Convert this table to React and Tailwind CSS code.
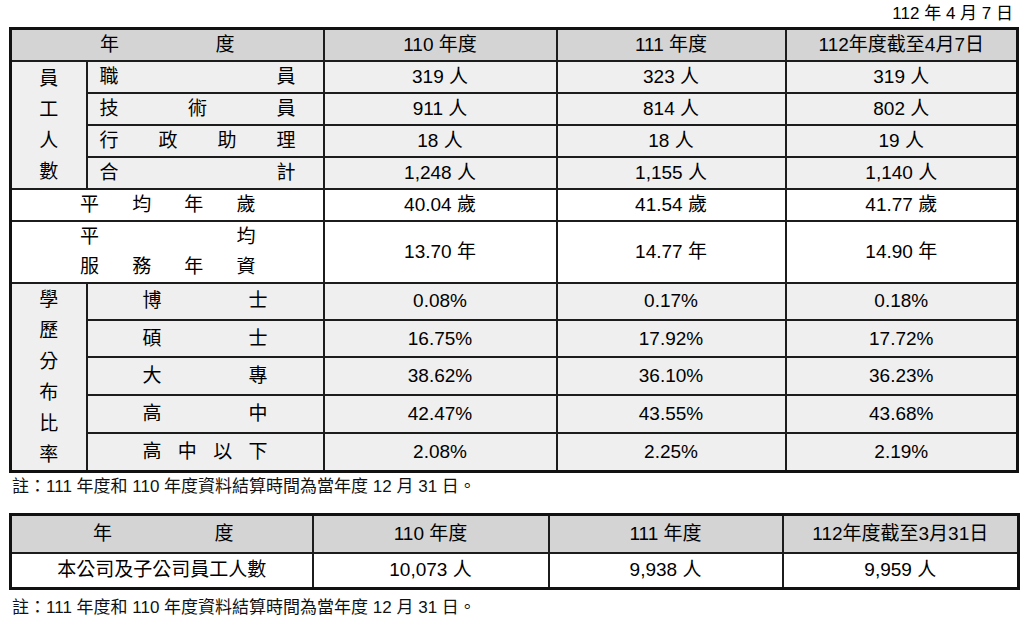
import React from "react";

const font = { fontFamily: '"Liberation Sans", "Noto Sans CJK TC", sans-serif' };

const Spread = ({ chars, className }) => (
  <div className={"flex justify-between " + className}>
    {chars.split("").map((c, i) => (
      <span key={i}>{c}</span>
    ))}
  </div>
);

const td = "border-2 border-[#1c1c1c] p-0 text-center align-middle leading-[24px]";

const staff = [
  ["職員", ["319 人", "323 人", "319 人"]],
  ["技術員", ["911 人", "814 人", "802 人"]],
  ["行政助理", ["18 人", "18 人", "19 人"]],
  ["合計", ["1,248 人", "1,155 人", "1,140 人"]],
];

const edu = [
  ["博士", ["0.08%", "0.17%", "0.18%"], "h-[37px]"],
  ["碩士", ["16.75%", "17.92%", "17.72%"], "h-[37px]"],
  ["大專", ["38.62%", "36.10%", "36.23%"], "h-[37px]"],
  ["高中", ["42.47%", "43.55%", "43.68%"], "h-[38px]"],
  ["高中以下", ["2.08%", "2.25%", "2.19%"], "h-[37px]"],
];

const Note = () => (
  <p className="pl-[12px] text-[17px] leading-[20px] text-[#111]">
    註：111 年度和 110 年度資料結算時間為當年度 12 月 31 日。
  </p>
);

const App = () => {
  return (
    <div className="w-[1024px] h-[626px] bg-white text-black overflow-hidden" style={font}>
      <div className="flex justify-end pr-[11px] pt-[4px] h-[27px] text-[17px] leading-[20px]">
        112 年 4 月 7 日
      </div>
      <div className="pl-[9px]">
        <table className="table-fixed border-collapse border-[3px] border-[#111] w-[1007px] text-[19px]">
          <colgroup>
            <col className="w-[76px]" />
            <col className="w-[237px]" />
            <col className="w-[233px]" />
            <col className="w-[229px]" />
            <col className="w-[232px]" />
          </colgroup>
          <tbody>
            <tr className="h-[32px] bg-[#d4d4d4]">
              <td colSpan={2} className={td}>
                <Spread chars="年度" className="px-[88px]" />
              </td>
              <td className={td}>110 年度</td>
              <td className={td}>111 年度</td>
              <td className={td}>112年度截至4月7日</td>
            </tr>
            {staff.map(([label, vals], i) => (
              <tr key={label} className="h-[32px] bg-[#efefef]">
                {i === 0 && (
                  <td rowSpan={4} className={td}>
                    <div className="flex flex-col items-center leading-[31px]">
                      <span>員</span>
                      <span>工</span>
                      <span>人</span>
                      <span>數</span>
                    </div>
                  </td>
                )}
                <td className={td}>
                  <Spread chars={label} className="pl-[12px] pr-[27px]" />
                </td>
                {vals.map((v, j) => (
                  <td key={j} className={td}>{v}</td>
                ))}
              </tr>
            ))}
            <tr className="h-[32px] bg-white">
              <td colSpan={2} className={td}>
                <Spread chars="平均年歲" className="pl-[68px] pr-[67px]" />
              </td>
              <td className={td}>40.04 歲</td>
              <td className={td}>41.54 歲</td>
              <td className={td}>41.77 歲</td>
            </tr>
            <tr className="h-[62px] bg-white">
              <td colSpan={2} className={td}>
                <div className="flex flex-col leading-[30px]">
                  <Spread chars="平均" className="pl-[68px] pr-[67px]" />
                  <Spread chars="服務年資" className="pl-[68px] pr-[67px]" />
                </div>
              </td>
              <td className={td}>13.70 年</td>
              <td className={td}>14.77 年</td>
              <td className={td}>14.90 年</td>
            </tr>
            {edu.map(([label, vals, h], i) => (
              <tr key={label} className={h + " bg-[#efefef]"}>
                {i === 0 && (
                  <td rowSpan={5} className={td}>
                    <div className="flex flex-col items-center leading-[31px]">
                      {"學歷分布比率".split("").map((c) => (
                        <span key={c}>{c}</span>
                      ))}
                    </div>
                  </td>
                )}
                <td className={td}>
                  <Spread chars={label} className="px-[55px]" />
                </td>
                {vals.map((v, j) => (
                  <td key={j} className={td}>{v}</td>
                ))}
              </tr>
            ))}
          </tbody>
        </table>
      </div>
      <div className="pt-[4px] h-[40px]">
        <Note />
      </div>
      <div className="pl-[9px]">
        <table className="table-fixed border-collapse border-[3px] border-[#111] w-[1008px] text-[19px]">
          <colgroup>
            <col className="w-[302px]" />
            <col className="w-[236px]" />
            <col className="w-[234px]" />
            <col className="w-[236px]" />
          </colgroup>
          <tbody>
            <tr className="h-[39px] bg-[#d4d4d4]">
              <td className={td}>
                <Spread chars="年度" className="pl-[81px] pr-[78px]" />
              </td>
              <td className={td}>110 年度</td>
              <td className={td}>111 年度</td>
              <td className={td}>112年度截至3月31日</td>
            </tr>
            <tr className="h-[35px] bg-white">
              <td className={td}>本公司及子公司員工人數</td>
              <td className={td}>10,073 人</td>
              <td className={td}>9,938 人</td>
              <td className={td}>9,959 人</td>
            </tr>
          </tbody>
        </table>
      </div>
      <div className="pt-[8px]">
        <Note />
      </div>
    </div>
  );
};

export default App;
